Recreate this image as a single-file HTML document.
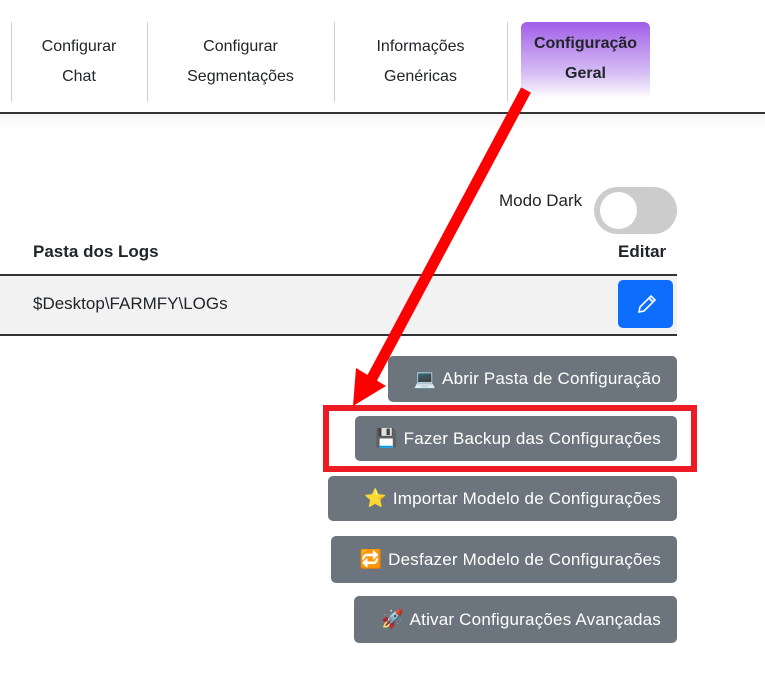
<!DOCTYPE html>
<html><head><meta charset="utf-8"><style>
body{margin:0;width:765px;height:685px;background:#fff;position:relative;overflow:hidden;font-family:"Liberation Sans",sans-serif;color:#212529}
.a{position:absolute}
.sep{position:absolute;top:22px;width:1px;height:80px;background:#d0d0d0}
.tab{position:absolute;text-align:center;font-size:16px;line-height:30px;top:32px}
.btn{position:absolute;background:#6c757d;color:#fff;border-radius:5px;font-size:17px;display:flex;align-items:center;justify-content:flex-end;padding-right:16px;box-sizing:border-box;right:88px;letter-spacing:0.2px}
.btn span.i{margin-right:6px;font-size:18px;letter-spacing:0}
</style></head><body>
<div class="sep" style="left:11px"></div>
<div class="sep" style="left:147px"></div>
<div class="sep" style="left:334px"></div>
<div class="sep" style="left:507px"></div>
<div class="tab" style="left:11px;width:136px">Configurar<br>Chat</div>
<div class="tab" style="left:147px;width:187px">Configurar<br>Segmentações</div>
<div class="tab" style="left:334px;width:173px">Informações<br>Genéricas</div>
<div class="a" style="left:521px;top:22px;width:129px;height:76px;border-radius:6px 6px 0 0;background:linear-gradient(#a15ee8,#d9c3f5 70%,#fff)"></div>
<div class="tab" style="left:521px;width:129px;top:29px;font-weight:bold">Configuração<br>Geral</div>
<div class="a" style="left:0;top:112px;width:765px;height:2px;background:#333"></div>
<div class="a" style="left:0;top:114px;width:765px;height:14px;background:linear-gradient(#f3f3f3,#fff)"></div>
<div class="a" style="left:499px;top:191px;font-size:17px">Modo Dark</div>
<div class="a" style="left:594px;top:187px;width:83px;height:47px;border-radius:24px;background:#ccc"></div>
<div class="a" style="left:600px;top:192px;width:37px;height:37px;border-radius:50%;background:#fff"></div>
<div class="a" style="left:33px;top:242px;font-size:17px;font-weight:bold">Pasta dos Logs</div>
<div class="a" style="left:618px;top:242px;font-size:17px;font-weight:bold">Editar</div>
<div class="a" style="left:0;top:274px;width:677px;height:58px;background:#f2f2f2;border-top:2px solid #333;border-bottom:2px solid #333"></div>
<div class="a" style="left:33px;top:294px;font-size:17px">$Desktop\FARMFY\LOGs</div>
<div class="a" style="left:618px;top:280px;width:55px;height:48px;background:#0d6efd;border-radius:5px"></div>
<svg class="a" style="left:634px;top:293px" width="24" height="22" viewBox="0 0 24 22"><path d="M5 19 L6 14 L17 3 L21 7 L10 18 Z M15 5 L19 9" fill="none" stroke="#fff" stroke-width="1.6"/></svg>
<div class="btn" style="left:388px;top:356px;height:46px"><span class="i">💻</span>Abrir Pasta de Configuração</div>
<div class="a" style="left:323px;top:405px;width:362px;height:55px;border:6px solid #ed1c24"></div>
<div class="btn" style="left:355px;top:416px;height:45px"><span class="i">💾</span>Fazer Backup das Configurações</div>
<div class="btn" style="left:328px;top:476px;height:45px"><span class="i">⭐</span>Importar Modelo de Configurações</div>
<div class="btn" style="left:331px;top:536px;height:47px"><span class="i">🔁</span>Desfazer Modelo de Configurações</div>
<div class="btn" style="left:354px;top:596px;height:47px"><span class="i">🚀</span>Ativar Configurações Avançadas</div>
<svg class="a" style="left:0;top:0" width="765" height="685"><line x1="526" y1="90" x2="370" y2="382" stroke="#f00" stroke-width="11"/><polygon points="353,406 356,368 386,386" fill="#f00"/></svg>
</body></html>
